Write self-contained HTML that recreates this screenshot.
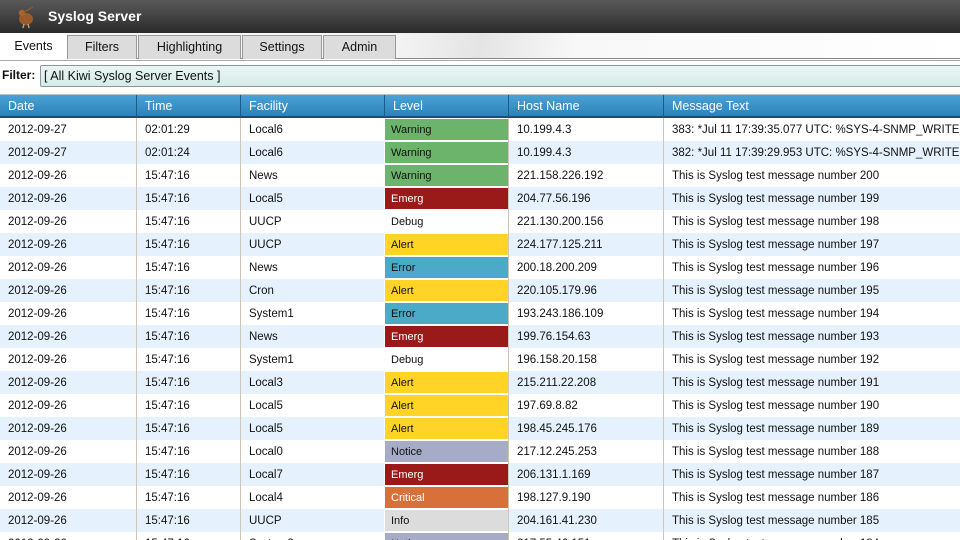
<!DOCTYPE html>
<html style="overflow:hidden;width:960px;height:540px"><head><meta charset="utf-8"><style>
*{margin:0;padding:0;box-sizing:border-box}
body{width:960px;height:540px;overflow:hidden;background:#fff;font-family:"Liberation Sans",sans-serif;font-size:11.5px;color:#111;position:relative}
.top{position:absolute;left:0;top:0;width:960px;height:33px;background:linear-gradient(#5a5a5a,#2a2a2a)}
.top .t{position:absolute;left:48px;top:8px;color:#fff;font-size:14px;font-weight:bold}
.tabbar{position:absolute;left:0;top:33px;width:960px;height:26px;background:linear-gradient(100deg,#f6f6f6 40%,#e4e4e4 50%,#f8f8f8 60%,#fff);border-bottom:1px solid #888}
.tab{position:absolute;top:2px;height:24px;background:#dcdcdc;border:1px solid #999;border-bottom:none;text-align:center;line-height:22px;font-size:12.5px;color:#111}
.tab.a{background:#fff;top:0;height:27px;border:none;line-height:26px}
.filter{position:absolute;left:0;top:60px;width:960px;height:32px;background:#fff;border-top:1px solid #aaa}
.filter b{position:absolute;left:2px;top:7px;font-size:12px}
.fbox{position:absolute;left:40px;top:4px;width:925px;height:22px;border:1px solid #8a9a9a;background:linear-gradient(#eaf6f4,#d6ebe8);font-size:12.5px;line-height:20px;padding-left:3px;border-radius:2px}
.hdr{position:absolute;left:0;top:94px;width:960px;height:24px;background:linear-gradient(#4aa2d4,#2c82bc);border-bottom:2px solid #154f78;border-top:1px solid #b8c4c8}
.hdr div{position:absolute;top:0;height:22px;line-height:22px;color:#fff;font-size:12.5px;padding-left:8px;border-left:1px solid #1a5a88}
.row{position:absolute;left:0;width:960px;height:23px;line-height:25px}
.row.o{background:#e5f1fc}
.row div{position:absolute;top:0;height:23px;padding-left:8px;white-space:nowrap;overflow:hidden}
.sep{position:absolute;top:118px;height:422px;width:1px;background:#cbc7b4}
.row .lv{border:1px solid #fff;padding-left:6px;font-size:11px;line-height:22px}
.W{background:#6cb46c}.E{background:#9a1a1a;color:#fff}.D{background:#fff}.A{background:#ffd427}.R{background:#4aaac8}.N{background:#a6acc8}.C{background:#d8703a;color:#fff}.I{background:#dcdcdc}
</style></head><body>
<div class="top">
<svg style="position:absolute;left:14px;top:4px" width="26" height="26" viewBox="0 0 26 26"><ellipse cx="12" cy="15" rx="7" ry="6" fill="#9a5a2a"/><circle cx="8" cy="9" r="3.2" fill="#a8642e"/><path d="M10 8 L19 3" stroke="#8a5a2a" stroke-width="1.5"/><path d="M10 20 L9 24 M14 20 L15 24" stroke="#c8a070" stroke-width="1.5"/></svg>
<div class="t">Syslog Server</div></div>
<div class="tabbar">
<div class="tab a" style="left:0;width:67px">Events</div>
<div class="tab" style="left:67px;width:70px">Filters</div>
<div class="tab" style="left:138px;width:103px">Highlighting</div>
<div class="tab" style="left:242px;width:80px">Settings</div>
<div class="tab" style="left:323px;width:73px">Admin</div>
</div>
<div class="filter"><b>Filter:</b><div class="fbox">[ All Kiwi Syslog Server Events ]</div></div>
<div class="hdr">
<div style="left:0;border:none">Date</div><div style="left:136px">Time</div><div style="left:240px">Facility</div><div style="left:384px">Level</div><div style="left:508px">Host Name</div><div style="left:663px">Message Text</div>
</div>
<div id="rows">
<div class="row" style="top:118px"><div style="left:0">2012-09-27</div><div style="left:137px">02:01:29</div><div style="left:241px">Local6</div><div class="lv W" style="left:384px;width:125px">Warning</div><div style="left:509px">10.199.4.3</div><div style="left:664px">383: *Jul 11 17:39:35.077 UTC: %SYS-4-SNMP_WRITENET</div></div>
<div class="row o" style="top:141px"><div style="left:0">2012-09-27</div><div style="left:137px">02:01:24</div><div style="left:241px">Local6</div><div class="lv W" style="left:384px;width:125px">Warning</div><div style="left:509px">10.199.4.3</div><div style="left:664px">382: *Jul 11 17:39:29.953 UTC: %SYS-4-SNMP_WRITENET</div></div>
<div class="row" style="top:164px"><div style="left:0">2012-09-26</div><div style="left:137px">15:47:16</div><div style="left:241px">News</div><div class="lv W" style="left:384px;width:125px">Warning</div><div style="left:509px">221.158.226.192</div><div style="left:664px">This is Syslog test message number 200</div></div>
<div class="row o" style="top:187px"><div style="left:0">2012-09-26</div><div style="left:137px">15:47:16</div><div style="left:241px">Local5</div><div class="lv E" style="left:384px;width:125px">Emerg</div><div style="left:509px">204.77.56.196</div><div style="left:664px">This is Syslog test message number 199</div></div>
<div class="row" style="top:210px"><div style="left:0">2012-09-26</div><div style="left:137px">15:47:16</div><div style="left:241px">UUCP</div><div class="lv D" style="left:384px;width:125px">Debug</div><div style="left:509px">221.130.200.156</div><div style="left:664px">This is Syslog test message number 198</div></div>
<div class="row o" style="top:233px"><div style="left:0">2012-09-26</div><div style="left:137px">15:47:16</div><div style="left:241px">UUCP</div><div class="lv A" style="left:384px;width:125px">Alert</div><div style="left:509px">224.177.125.211</div><div style="left:664px">This is Syslog test message number 197</div></div>
<div class="row" style="top:256px"><div style="left:0">2012-09-26</div><div style="left:137px">15:47:16</div><div style="left:241px">News</div><div class="lv R" style="left:384px;width:125px">Error</div><div style="left:509px">200.18.200.209</div><div style="left:664px">This is Syslog test message number 196</div></div>
<div class="row o" style="top:279px"><div style="left:0">2012-09-26</div><div style="left:137px">15:47:16</div><div style="left:241px">Cron</div><div class="lv A" style="left:384px;width:125px">Alert</div><div style="left:509px">220.105.179.96</div><div style="left:664px">This is Syslog test message number 195</div></div>
<div class="row" style="top:302px"><div style="left:0">2012-09-26</div><div style="left:137px">15:47:16</div><div style="left:241px">System1</div><div class="lv R" style="left:384px;width:125px">Error</div><div style="left:509px">193.243.186.109</div><div style="left:664px">This is Syslog test message number 194</div></div>
<div class="row o" style="top:325px"><div style="left:0">2012-09-26</div><div style="left:137px">15:47:16</div><div style="left:241px">News</div><div class="lv E" style="left:384px;width:125px">Emerg</div><div style="left:509px">199.76.154.63</div><div style="left:664px">This is Syslog test message number 193</div></div>
<div class="row" style="top:348px"><div style="left:0">2012-09-26</div><div style="left:137px">15:47:16</div><div style="left:241px">System1</div><div class="lv D" style="left:384px;width:125px">Debug</div><div style="left:509px">196.158.20.158</div><div style="left:664px">This is Syslog test message number 192</div></div>
<div class="row o" style="top:371px"><div style="left:0">2012-09-26</div><div style="left:137px">15:47:16</div><div style="left:241px">Local3</div><div class="lv A" style="left:384px;width:125px">Alert</div><div style="left:509px">215.211.22.208</div><div style="left:664px">This is Syslog test message number 191</div></div>
<div class="row" style="top:394px"><div style="left:0">2012-09-26</div><div style="left:137px">15:47:16</div><div style="left:241px">Local5</div><div class="lv A" style="left:384px;width:125px">Alert</div><div style="left:509px">197.69.8.82</div><div style="left:664px">This is Syslog test message number 190</div></div>
<div class="row o" style="top:417px"><div style="left:0">2012-09-26</div><div style="left:137px">15:47:16</div><div style="left:241px">Local5</div><div class="lv A" style="left:384px;width:125px">Alert</div><div style="left:509px">198.45.245.176</div><div style="left:664px">This is Syslog test message number 189</div></div>
<div class="row" style="top:440px"><div style="left:0">2012-09-26</div><div style="left:137px">15:47:16</div><div style="left:241px">Local0</div><div class="lv N" style="left:384px;width:125px">Notice</div><div style="left:509px">217.12.245.253</div><div style="left:664px">This is Syslog test message number 188</div></div>
<div class="row o" style="top:463px"><div style="left:0">2012-09-26</div><div style="left:137px">15:47:16</div><div style="left:241px">Local7</div><div class="lv E" style="left:384px;width:125px">Emerg</div><div style="left:509px">206.131.1.169</div><div style="left:664px">This is Syslog test message number 187</div></div>
<div class="row" style="top:486px"><div style="left:0">2012-09-26</div><div style="left:137px">15:47:16</div><div style="left:241px">Local4</div><div class="lv C" style="left:384px;width:125px">Critical</div><div style="left:509px">198.127.9.190</div><div style="left:664px">This is Syslog test message number 186</div></div>
<div class="row o" style="top:509px"><div style="left:0">2012-09-26</div><div style="left:137px">15:47:16</div><div style="left:241px">UUCP</div><div class="lv I" style="left:384px;width:125px">Info</div><div style="left:509px">204.161.41.230</div><div style="left:664px">This is Syslog test message number 185</div></div>
<div class="row" style="top:532px;height:8px;overflow:hidden"><div style="left:0">2012-09-26</div><div style="left:137px">15:47:16</div><div style="left:241px">System2</div><div class="lv N" style="left:384px;width:125px">Notice</div><div style="left:509px">217.55.46.151</div><div style="left:664px">This is Syslog test message number 184</div></div>
</div>
<div class="sep" style="left:136px"></div><div class="sep" style="left:240px"></div><div class="sep" style="left:508px"></div><div class="sep" style="left:663px"></div>
</body></html>
